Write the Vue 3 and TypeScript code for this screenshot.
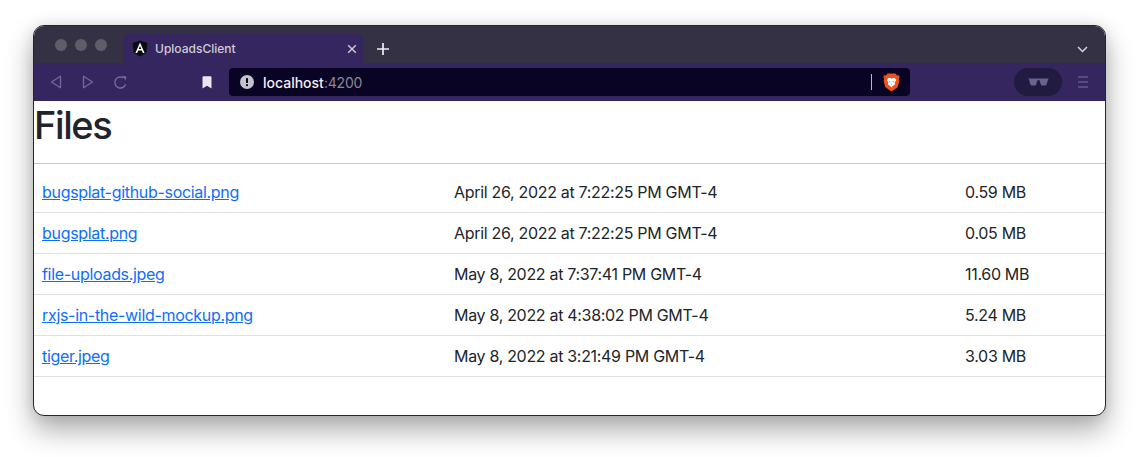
<script setup lang="ts">
interface FileRow { name: string; date: string; size: string }
const files: FileRow[] = [
  { name: 'bugsplat-github-social.png', date: 'April 26, 2022 at 7:22:25 PM GMT-4', size: '0.59 MB' },
  { name: 'bugsplat.png', date: 'April 26, 2022 at 7:22:25 PM GMT-4', size: '0.05 MB' },
  { name: 'file-uploads.jpeg', date: 'May 8, 2022 at 7:37:41 PM GMT-4', size: '11.60 MB' },
  { name: 'rxjs-in-the-wild-mockup.png', date: 'May 8, 2022 at 4:38:02 PM GMT-4', size: '5.24 MB' },
  { name: 'tiger.jpeg', date: 'May 8, 2022 at 3:21:49 PM GMT-4', size: '3.03 MB' },
]
</script>

<template>
  <div class="page">
    <div class="window">
      <div class="tabbar">
        <div class="lights"><i></i><i></i><i></i></div>
        <div class="tab">
          <svg class="ng" width="16" height="17" viewBox="0 0 16 17">
            <path d="M8 .5 15.4 3.1 14.2 12.9 8 16.4 1.8 12.9.6 3.1Z" fill="#0b0b12" />
            <path d="M8 2.6 3.4 12.9H5.2L6.1 10.6H9.9L10.8 12.9H12.6ZM8 6.1 9.3 9.1H6.7Z" fill="#fff" fill-rule="evenodd" />
          </svg>
          <span class="tab-title">UploadsClient</span>
          <svg class="tab-x" width="10" height="10" viewBox="0 0 10 10"><path d="M1.2 1.2 8.8 8.8M8.8 1.2 1.2 8.8" stroke="#cfccd8" stroke-width="1.4" /></svg>
        </div>
        <svg class="plus" width="12" height="12" viewBox="0 0 12 12"><path d="M6 0V12M0 6H12" stroke="#f0eff4" stroke-width="1.7" /></svg>
        <svg class="chev" width="11" height="7" viewBox="0 0 11 7"><path d="M1 1 5.5 5.5 10 1" fill="none" stroke="#d5d3dc" stroke-width="1.5" /></svg>
      </div>
      <div class="toolbar">
        <div class="nav">
          <svg width="12" height="14" viewBox="0 0 12 14"><path d="M10.5 1.2V12.8L1.5 7Z" fill="none" stroke="#77679f" stroke-width="1.3" stroke-linejoin="round" /></svg>
          <svg width="12" height="14" viewBox="0 0 12 14"><path d="M1.5 1.2V12.8L10.5 7Z" fill="none" stroke="#77679f" stroke-width="1.3" stroke-linejoin="round" /></svg>
          <svg class="reload" width="15" height="15" viewBox="0 0 15 15"><path d="M12.6 9.2A5.5 5.5 0 1 1 10.4 2.9" fill="none" stroke="#77679f" stroke-width="1.4" /><path d="M9.2 .8 13.4 1.6 12.8 5.6Z" fill="#77679f" /></svg>
        </div>
        <svg class="bookmark" width="10" height="13" viewBox="0 0 10 13"><path d="M.5 1.2Q.5.2 1.5.2H8.5Q9.5.2 9.5 1.2V12.6L5 9.8.5 12.6Z" fill="#e9e7ee" /></svg>
        <div class="urlbar">
          <svg class="info" width="14" height="14" viewBox="0 0 14 14"><circle cx="7" cy="7" r="7" fill="#c4c3cb" /><rect x="6" y="3" width="2" height="5" rx=".6" fill="#0a0424" /><circle cx="7" cy="10.2" r="1.1" fill="#0a0424" /></svg>
          <span class="host">localhost<span class="port">:4200</span></span>
          <span class="sep"></span>
          <svg class="brave" width="17" height="19" viewBox="0 0 17 19">
            <path d="M4.6.6H12.4L14 2.4 16 2.2 16.6 4 15.8 6 16.4 8.2 14.6 14.2 8.5 18.4 2.4 14.2.6 8.2 1.2 6 .4 4 1 2.2 3 2.4Z" fill="#f1501f" />
            <path d="M5 5H7.4L8.5 5.8 9.6 5H12L13.2 7.4 11.8 9 12 11.4 10.4 12.6 8.5 14.4 6.6 12.6 5 11.4 5.2 9 3.8 7.4Z" fill="#fff" />
            <path d="M6 8.2H7.6L6.6 9.4ZM11 8.2H9.4L10.4 9.4ZM7.8 11H9.2L8.5 11.8Z" fill="#f1501f" />
          </svg>
        </div>
        <div class="shades">
          <svg width="21" height="8" viewBox="0 0 21 8"><path d="M0 .4H21L20 1.6 18.6 6.6Q18.2 7.6 17 7.6H14.4Q13.2 7.6 12.8 6.6L11.6 2.2H9.4L8.2 6.6Q7.8 7.6 6.6 7.6H4Q2.8 7.6 2.4 6.6L1 1.6Z" fill="#6d6190" /></svg>
        </div>
        <svg class="menu" width="10" height="12" viewBox="0 0 10 12"><path d="M0 1H10M0 6H10M0 11H10" stroke="#66578a" stroke-width="1.4" /></svg>
      </div>
      <div class="content">
        <h1>Files</h1>
        <hr />
        <div class="files">
          <div v-for="file in files" :key="file.name" class="row">
            <a href="#">{{ file.name }}</a>
            <span>{{ file.date }}</span>
            <span>{{ file.size }}</span>
          </div>
        </div>
      </div>
    </div>
  </div>
</template>

<style>
html, body { margin: 0; background: #fff; overflow: hidden; }
</style>

<style scoped>
.page {
  width: 1139px;
  height: 457px;
  padding: 25px 33px 41px;
  box-sizing: border-box;
  font-family: Inter, "Liberation Sans", sans-serif;
  overflow: hidden;
}
.window {
  height: 391px;
  border-radius: 11px;
  overflow: hidden;
  border: 1px solid #26252b;
  box-sizing: border-box;
  background: #fff;
  box-shadow: 0 14px 28px rgba(0, 0, 0, 0.33), 0 0 14px rgba(0, 0, 0, 0.1);
  display: flex;
  flex-direction: column;
}
.tabbar {
  height: 37px;
  flex: none;
  background: #353145;
  display: flex;
  align-items: flex-end;
}
.lights {
  display: flex;
  gap: 8px;
  margin: 0 0 12px 21px;
  width: 68px;
  flex: none;
}
.lights i {
  width: 12px;
  height: 12px;
  border-radius: 50%;
  background: #605d6b;
}
.tab {
  width: 240px;
  height: 29px;
  background: #362660;
  border-radius: 5px 5px 0 0;
  display: flex;
  align-items: center;
  flex: none;
  box-sizing: border-box;
  padding: 0 6px 0 9px;
}
.ng { flex: none; }
.tab-title {
  margin-left: 7px;
  font-size: 12px;
  font-weight: 500;
  color: #cfccd8;
  flex: 1;
}
.plus { margin: 0 0 8px 14px; flex: none; }
.chev { margin: 0 17px 10px auto; flex: none; }
.toolbar {
  height: 38px;
  flex: none;
  background: #362660;
  display: flex;
  align-items: center;
}
.nav {
  display: flex;
  align-items: center;
  gap: 20px;
  margin-left: 16px;
  width: 150px;
  flex: none;
}
.reload { margin-left: -1px; }
.bookmark { flex: none; margin-left: 2px; }
.urlbar {
  margin-left: 17px;
  width: 681px;
  height: 28px;
  flex: none;
  background: #0a0424;
  border-radius: 4px;
  display: flex;
  align-items: center;
  box-sizing: border-box;
  padding: 0 10px 0 11px;
}
.host {
  margin-left: 9px;
  font-size: 14px;
  font-weight: 500;
  color: #f1f0f4;
  flex: 1;
}
.port { color: #8a8796; font-weight: 400; letter-spacing: -0.2px; }
.sep {
  width: 1px;
  height: 16px;
  background: #b9b7c0;
  margin-right: 11px;
}
.shades {
  margin-left: 104px;
  width: 48px;
  height: 28px;
  flex: none;
  border-radius: 14px;
  background: #211b3f;
  display: flex;
  align-items: center;
  justify-content: center;
}
.menu { margin-left: 16px; flex: none; }
.content {
  flex: 1;
  color: #212529;
}
h1 {
  margin: 0;
  font-size: 38px;
  font-weight: 500;
  line-height: 48px;
  height: 62px;
  box-sizing: border-box;
  letter-spacing: -1.4px;
}
hr {
  margin: 0 0 8px;
  border: 0;
  border-top: 1px solid #c9c9c9;
}
.row {
  display: grid;
  grid-template-columns: 412px 511px 1fr;
  padding: 8px;
  height: 41px;
  box-sizing: border-box;
  border-bottom: 1px solid #dee2e6;
  font-size: 16px;
  line-height: 24px;
  letter-spacing: -0.31px;
  color: #212529;
}
.row a { color: #0d6efd; text-decoration: underline; }
</style>
